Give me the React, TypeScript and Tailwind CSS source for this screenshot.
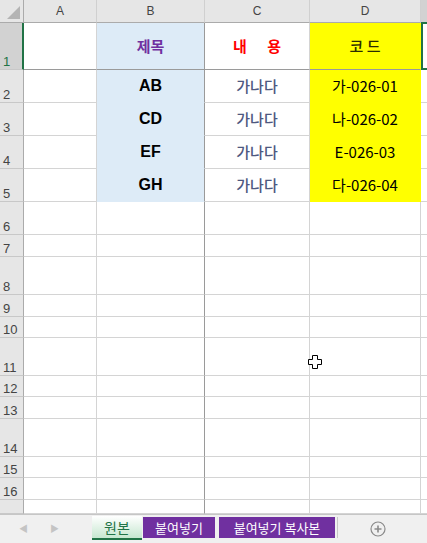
import React from "react";

const KR = "font-['Noto_Sans_CJK_KR','Liberation_Sans',sans-serif]";

type Row = {
  n: number;
  h: number;
  b?: string;
  c?: string;
  d?: string;
  head?: boolean;
};

const rows: Row[] = [
  { n: 1, h: 47, head: true },
  { n: 2, h: 33, b: "AB", c: "가나다", d: "가-026-01" },
  { n: 3, h: 33, b: "CD", c: "가나다", d: "나-026-02" },
  { n: 4, h: 33, b: "EF", c: "가나다", d: "E-026-03" },
  { n: 5, h: 33, b: "GH", c: "가나다", d: "다-026-04" },
  { n: 6, h: 33 },
  { n: 7, h: 22 },
  { n: 8, h: 38 },
  { n: 9, h: 22 },
  { n: 10, h: 21 },
  { n: 11, h: 38 },
  { n: 12, h: 21 },
  { n: 13, h: 22 },
  { n: 14, h: 38 },
  { n: 15, h: 21 },
  { n: 16, h: 22 },
  { n: 17, h: 14 },
];

const cols = "grid grid-cols-[24px_73px_108px_105px_111px_6px]";

const ColHeader = () => (
  <div className={`${cols} h-[23px] bg-[#e6e6e6] text-[12px] text-[#444] font-['Liberation_Sans',sans-serif]`}>
    <div className="flex items-end justify-end border-r border-b border-[#ababab] pr-[3px] pb-[3px]">
      <svg width="13" height="13" viewBox="0 0 13 13">
        <path d="M13 0V13H0z" fill="#b4b4b4" />
      </svg>
    </div>
    {["A", "B", "C", "D"].map((l) => (
      <div key={l} className="flex items-center justify-center border-r border-b border-[#ababab] border-r-[#d0d0d0]">
        {l}
      </div>
    ))}
    <div className="border-b border-[#ababab] bg-[#d2d2d2]" />
  </div>
);

const GridRow = ({ r }: { r: Row }) => {
  const fill = r.n <= 5;
  const bottom = r.head ? "border-b-[#9a9a9a]" : "";
  return (
    <div className={cols} style={{ height: r.h }}>
      <div
        className={`flex items-end pl-[3px] pb-[1px] text-[13px] leading-none font-['Liberation_Sans',sans-serif] border-b border-[#c8c8c8] ${
          r.head
            ? "bg-[#d2d2d2] text-[#217346] border-r-2 border-r-[#217346]"
            : "bg-[#e6e6e6] text-[#444] border-r border-r-[#ababab]"
        }`}
      >
        {r.n < 17 ? r.n : ""}
      </div>
      <div className={`border-r border-b border-[#d4d4d4] ${bottom}`} />
      <div
        className={`flex items-center justify-center border-r border-r-[#9a9a9a] border-b ${
          r.head ? "bg-[#ddebf7] border-b-[#9a9a9a]" : fill ? "bg-[#ddebf7] border-b-[#ddebf7]" : "border-b-[#d4d4d4]"
        }`}
      >
        {r.head ? (
          <span className={`${KR} text-[15px] font-bold text-[#7030a0]`}>제목</span>
        ) : (
          r.b && <span className="font-['Liberation_Sans',sans-serif] text-[16px] font-bold text-black">{r.b}</span>
        )}
      </div>
      <div className={`flex items-center justify-center border-r border-b border-[#d4d4d4] ${bottom}`}>
        {r.head ? (
          <span className={`${KR} text-[15px] font-bold text-[#ff0000] whitespace-pre`}>{"내      용"}</span>
        ) : (
          r.c && <span className={`${KR} text-[15px] font-medium text-[#4e5880]`}>{r.c}</span>
        )}
      </div>
      <div
        className={`flex items-center justify-center border-r border-b ${
          r.head
            ? "bg-[#ffff00] border-[#ffff00] border-b-[#9a9a9a]"
            : fill
              ? "bg-[#ffff00] border-[#ffff00]"
              : "border-[#d4d4d4]"
        }`}
      >
        {r.head ? (
          <span className={`${KR} text-[15px] font-medium text-[#2b2b00] whitespace-pre`}>{"코 드"}</span>
        ) : (
          r.d && <span className={`${KR} text-[15px] text-black`}>{r.d}</span>
        )}
      </div>
      <div className={r.head ? "border-2 border-[#217346] border-r-0 -mt-[1px]" : "border-b border-[#d4d4d4]"} />
    </div>
  );
};

const TabBar = () => (
  <div className={`flex h-[29px] border-t border-[#c6c6c6] bg-[#f0f0f0] ${KR}`}>
    <div className="flex w-[92px] items-center gap-[22px] pl-[19px] text-[9px] text-[#c4c4c4]">
      <span>◀</span>
      <span>▶</span>
    </div>
    <div className="mt-[1px] flex h-[24px] w-[50px] items-center justify-center border-b-2 border-[#217346] bg-gradient-to-b from-[#ffffff] to-[#c6e7d0] text-[14px] text-[#217346]">
      원본
    </div>
    <div className="ml-[1px] mt-[2px] flex h-[21px] w-[72px] items-center justify-center bg-[#7030a0] text-[13px] text-white">
      붙여넣기
    </div>
    <div className="ml-[4px] mt-[2px] flex h-[21px] w-[116px] items-center justify-center bg-[#7030a0] text-[13px] text-white">
      붙여넣기 복사본
    </div>
    <div className="ml-[2px] mt-[2px] h-[21px] border-l border-[#c6c6c6]" />
    <div className="flex flex-1 items-center pl-[32px]">
      <svg width="16" height="16" viewBox="0 0 16 16" className="-mt-[1px]">
        <circle cx="8" cy="8" r="7" fill="none" stroke="#8a8a8a" strokeWidth="1.2" />
        <path d="M8 4.5v7M4.5 8h7" stroke="#8a8a8a" strokeWidth="1.6" />
      </svg>
    </div>
  </div>
);

export default function App() {
  return (
    <div className="relative h-[543px] w-[427px] overflow-hidden bg-white">
      <ColHeader />
      {rows.map((r) => (
        <GridRow key={r.n} r={r} />
      ))}
      <TabBar />
      <svg width="14" height="14" viewBox="0 0 14 14" className="absolute left-[308px] top-[355px]">
        <path d="M4.5 0.5h5v4h4v5h-4v4h-5v-4h-4v-5h4z" fill="white" stroke="black" strokeWidth="1" />
      </svg>
    </div>
  );
}
